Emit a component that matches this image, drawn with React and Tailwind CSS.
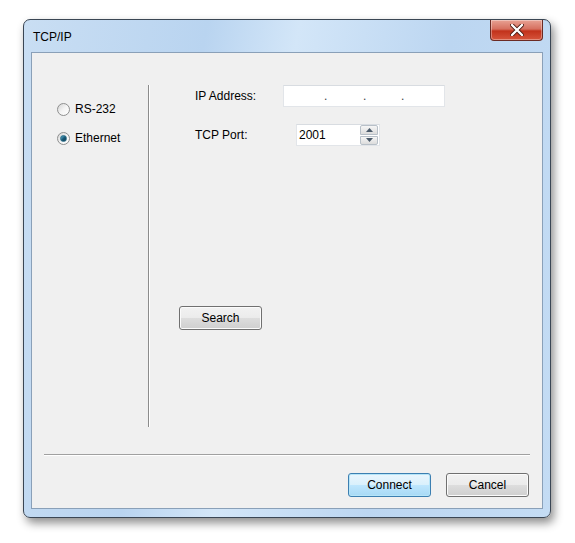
import React from 'react';

const font = { fontFamily: '"Liberation Sans", Arial, sans-serif' };

function Radio({ checked, label }) {
    return (
        <div className="flex h-[20px] items-center gap-[5px]">
            <span className="flex h-[13px] w-[13px] items-center justify-center rounded-full border border-[#8e8f8f] bg-gradient-to-br from-[#d4d4d4] via-[#f4f4f4] to-[#ffffff]">
                {checked && (
                    <span className="h-[7px] w-[7px] rounded-full border border-[#2a6d88] bg-gradient-to-br from-[#5fb7d8] via-[#1b5a78] to-[#0d3b52]" />
                )}
            </span>
            <span className="text-[12px] text-black">{label}</span>
        </div>
    );
}

function Button({ children, primary = false }) {
    const look = primary
        ? 'border-[#3c7fb1] bg-[linear-gradient(#eaf6fd_0%,#d9f0fc_50%,#bee6fd_51%,#a7d9f5_100%)] shadow-[inset_0_0_0_1px_#b6e5f8]'
        : 'border-[#707070] bg-[linear-gradient(#f2f2f2_0%,#ebebeb_50%,#dddddd_51%,#cfcfcf_100%)] shadow-[inset_0_0_0_1px_#fbfbfb]';
    return (
        <button
            type="button"
            className={`flex h-[24px] w-[83px] items-center justify-center rounded-[3px] border text-[12px] text-black ${look}`}
        >
            {children}
        </button>
    );
}

export default function App() {
    return (
        <div className="h-[543px] w-[575px] bg-white pl-[23px] pt-[19px]" style={font}>
            <div className="flex h-[499px] w-[528px] flex-col rounded-[7px] border border-[#3a4654] bg-[linear-gradient(100deg,#c9def3_0%,#b9d4f0_30%,#d3e6f8_45%,#bcd6f1_70%,#c4dcf4_100%)] shadow-[3px_5px_10px_rgba(0,0,0,0.45)]">
                <div className="flex h-[32px] items-start justify-between pl-[9px] pr-[7px]">
                    <span className="mt-[10px] text-[12px] leading-[14px] text-black">TCP/IP</span>
                    <div className="flex h-[21px] w-[53px] items-center justify-center rounded-b-[4px] border border-t-0 border-[#6b2b24] bg-[linear-gradient(#e8a294_0%,#d6705f_45%,#c2321b_55%,#d6553c_100%)] shadow-[inset_0_0_0_1px_rgba(255,255,255,0.35)]">
                        <svg width="14" height="12" viewBox="0 0 14 12">
                            <path d="M2 1 L12 11 M12 1 L2 11" stroke="#4a1a12" strokeWidth="4" strokeLinecap="round" />
                            <path d="M2 1 L12 11 M12 1 L2 11" stroke="#ffffff" strokeWidth="2.4" strokeLinecap="round" />
                        </svg>
                    </div>
                </div>

                <div className="mx-[7px] flex h-[457px] flex-col border border-[#8aa0b8] bg-[#f0f0f0]">
                    <div className="mt-[32px] flex h-[342px]">
                        <div className="w-[116px] pl-[25px] pt-[14px]">
                            <div className="flex flex-col gap-[9px]">
                                <Radio label="RS-232" />
                                <Radio label="Ethernet" checked />
                            </div>
                        </div>

                        <div className="h-full w-[2px] border-l border-[#8c8c8c] bg-white" />

                        <div className="flex flex-col pl-[29px]">
                            <div className="ml-[16px] flex h-[22px] items-center">
                                <span className="w-[88px] text-[12px] text-black">IP Address:</span>
                                <div className="flex h-[22px] w-[162px] items-center border border-[#e2e5e9] border-t-[#d8dce1] bg-white pl-[40px] text-[12px] text-[#404040]">
                                    <span className="w-[39px]">.</span>
                                    <span className="w-[38px]">.</span>
                                    <span>.</span>
                                </div>
                            </div>

                            <div className="ml-[16px] mt-[17px] flex h-[22px] items-center">
                                <span className="w-[101px] text-[12px] text-black">TCP Port:</span>
                                <div className="flex h-[22px] w-[84px] items-center border border-[#e2e5e9] border-t-[#d8dce1] bg-white pl-[2px]">
                                    <span className="flex-1 text-[12px] text-black">2001</span>
                                    <div className="mr-[1px] flex h-[20px] w-[18px] flex-col gap-px">
                                        <div className="flex flex-1 items-center justify-center rounded-t-[2px] border border-[#b8c0c8] bg-[linear-gradient(#f6f6f6,#dcdcdc)]">
                                            <svg width="7" height="4" viewBox="0 0 7 4">
                                                <path d="M0 4 L3.5 0 L7 4 Z" fill="#4a5a6a" />
                                            </svg>
                                        </div>
                                        <div className="flex flex-1 items-center justify-center rounded-b-[2px] border border-[#b8c0c8] bg-[linear-gradient(#f6f6f6,#dcdcdc)]">
                                            <svg width="7" height="4" viewBox="0 0 7 4">
                                                <path d="M0 0 L3.5 4 L7 0 Z" fill="#4a5a6a" />
                                            </svg>
                                        </div>
                                    </div>
                                </div>
                            </div>

                            <div className="mt-[160px]">
                                <Button>Search</Button>
                            </div>
                        </div>
                    </div>

                    <div className="mx-[12px] mt-[27px] h-[2px] border-t border-[#a0a0a0] bg-white" />

                    <div className="mt-[17px] flex justify-end gap-[15px] pr-[13px]">
                        <Button primary>Connect</Button>
                        <Button>Cancel</Button>
                    </div>
                </div>
            </div>
        </div>
    );
}
